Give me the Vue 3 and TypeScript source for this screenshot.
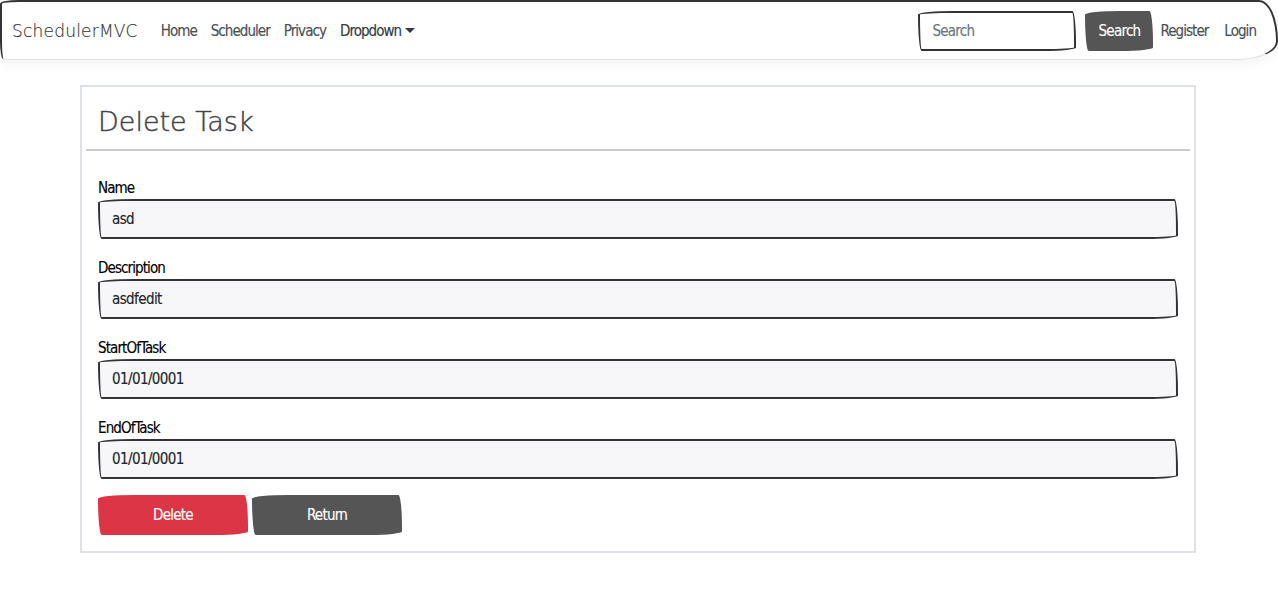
<template>
  <div class="page">
    <nav class="navbar">
      <a class="brand">SchedulerMVC</a>
      <ul class="nav-links">
        <li v-for="link in links" :key="link"><a>{{ link }}</a></li>
        <li><a class="dropdown">Dropdown</a></li>
      </ul>
      <form class="search" @submit.prevent>
        <input type="text" placeholder="Search" />
        <button type="submit">Search</button>
      </form>
      <ul class="nav-links account">
        <li><a>Register</a></li>
        <li><a>Login</a></li>
      </ul>
    </nav>

    <main class="card">
      <h1 class="title">Delete Task</h1>
      <hr />
      <form class="fields" @submit.prevent>
        <div v-for="field in fields" :key="field.label" class="field">
          <label>{{ field.label }}</label>
          <input type="text" :value="field.value" readonly />
        </div>
        <div class="actions">
          <button type="submit" class="btn delete">Delete</button>
          <button type="button" class="btn back">Return</button>
        </div>
      </form>
    </main>
  </div>
</template>

<script setup lang="ts">
interface Field {
  label: string
  value: string
}

const links: string[] = ["Home", "Scheduler", "Privacy"]

const fields: Field[] = [
  { label: "Name", value: "asd" },
  { label: "Description", value: "asdfedit" },
  { label: "StartOfTask", value: "01/01/0001" },
  { label: "EndOfTask", value: "01/01/0001" }
]
</script>

<style>
body {
  margin: 0;
  background: #fff;
}
</style>

<style scoped>
.page {
  font-family: "DejaVu Sans Condensed", "DejaVu Sans", sans-serif;
  font-stretch: condensed;
  font-size: 15px;
  letter-spacing: -0.75px;
  color: #212529;
  -webkit-text-stroke: 0.15px currentColor;
}

.navbar {
  display: flex;
  align-items: center;
  box-sizing: border-box;
  height: 60px;
  padding: 0 20px 0 10px;
  background: #fff;
  border: 2px solid #333;
  border-bottom: 1px solid #dee2e6;
  border-radius: 25px 25px 55px 5px / 5px 55px 25px 25px;
  box-shadow: 0 4px 12px rgba(0, 0, 0, 0.05);
}

.brand {
  font-family: "DejaVu Sans ExtraLight", "DejaVu Sans", sans-serif;
  font-stretch: normal;
  font-size: 17px;
  font-weight: 200;
  letter-spacing: 0.2px;
  color: #333;
  margin-right: 23px;
}

.nav-links {
  display: flex;
  gap: 14px;
  list-style: none;
  margin: 0;
  padding: 0;
  letter-spacing: -0.95px;
  color: #495057;
}

.account {
  gap: 16px;
}

.dropdown {
  color: #343a40;
}

.dropdown::after {
  content: "";
  display: inline-block;
  margin-left: 4px;
  vertical-align: 3px;
  border-top: 5px solid;
  border-left: 5px solid transparent;
  border-right: 5px solid transparent;
}

.search {
  display: flex;
  align-items: center;
  gap: 9px;
  margin-left: auto;
  margin-right: 7px;
}

.search input {
  box-sizing: border-box;
  width: 158px;
  height: 40px;
  padding: 0 12px;
  font: inherit;
  letter-spacing: inherit;
  border: 2px solid #333;
  border-radius: 255px 25px 225px 25px / 25px 225px 25px 255px;
  outline: none;
}

.search input::placeholder {
  color: #6c757d;
}

.search button {
  box-sizing: border-box;
  width: 68px;
  height: 40px;
  font: inherit;
  letter-spacing: inherit;
  color: #fff;
  background: #555;
  border: none;
  border-radius: 255px 25px 225px 25px / 25px 225px 25px 255px;
}

.card {
  box-sizing: border-box;
  width: 1116px;
  height: 468px;
  margin: 25px 0 0 80px;
  padding: 0 4px;
  background: #fff;
  border: 2px solid #dee2e6;
}

.title {
  box-sizing: border-box;
  height: 62px;
  margin: 0;
  padding: 15px 10px 0 12px;
  font-family: "DejaVu Sans ExtraLight", "DejaVu Sans", sans-serif;
  font-stretch: normal;
  font-size: 27px;
  font-weight: 200;
  letter-spacing: 0;
  line-height: 40px;
  color: #333;
  -webkit-text-stroke: 0.5px #555;
}

hr {
  margin: 0;
  height: 2px;
  border: none;
  background: #ccc;
}

.fields {
  display: flex;
  flex-direction: column;
  padding: 24px 12px 0;
}

.field {
  margin-bottom: 16px;
}

.field label {
  display: block;
  height: 24px;
  line-height: 26px;
  letter-spacing: -0.9px;
  color: #000;
}

.field input {
  display: block;
  box-sizing: border-box;
  width: 100%;
  height: 40px;
  padding: 0 12px;
  font: inherit;
  letter-spacing: -0.6px;
  color: #212529;
  background: #f7f7f9;
  border: 2px solid #333;
  border-radius: 255px 25px 225px 25px / 25px 225px 25px 255px;
  outline: none;
}

.actions {
  display: flex;
  gap: 4px;
}

.btn {
  width: 150px;
  height: 40px;
  font: inherit;
  letter-spacing: inherit;
  color: #fff;
  border: none;
  border-radius: 255px 25px 225px 25px / 25px 225px 25px 255px;
}

.delete {
  background: #dc3545;
}

.back {
  background: #555;
}
</style>
